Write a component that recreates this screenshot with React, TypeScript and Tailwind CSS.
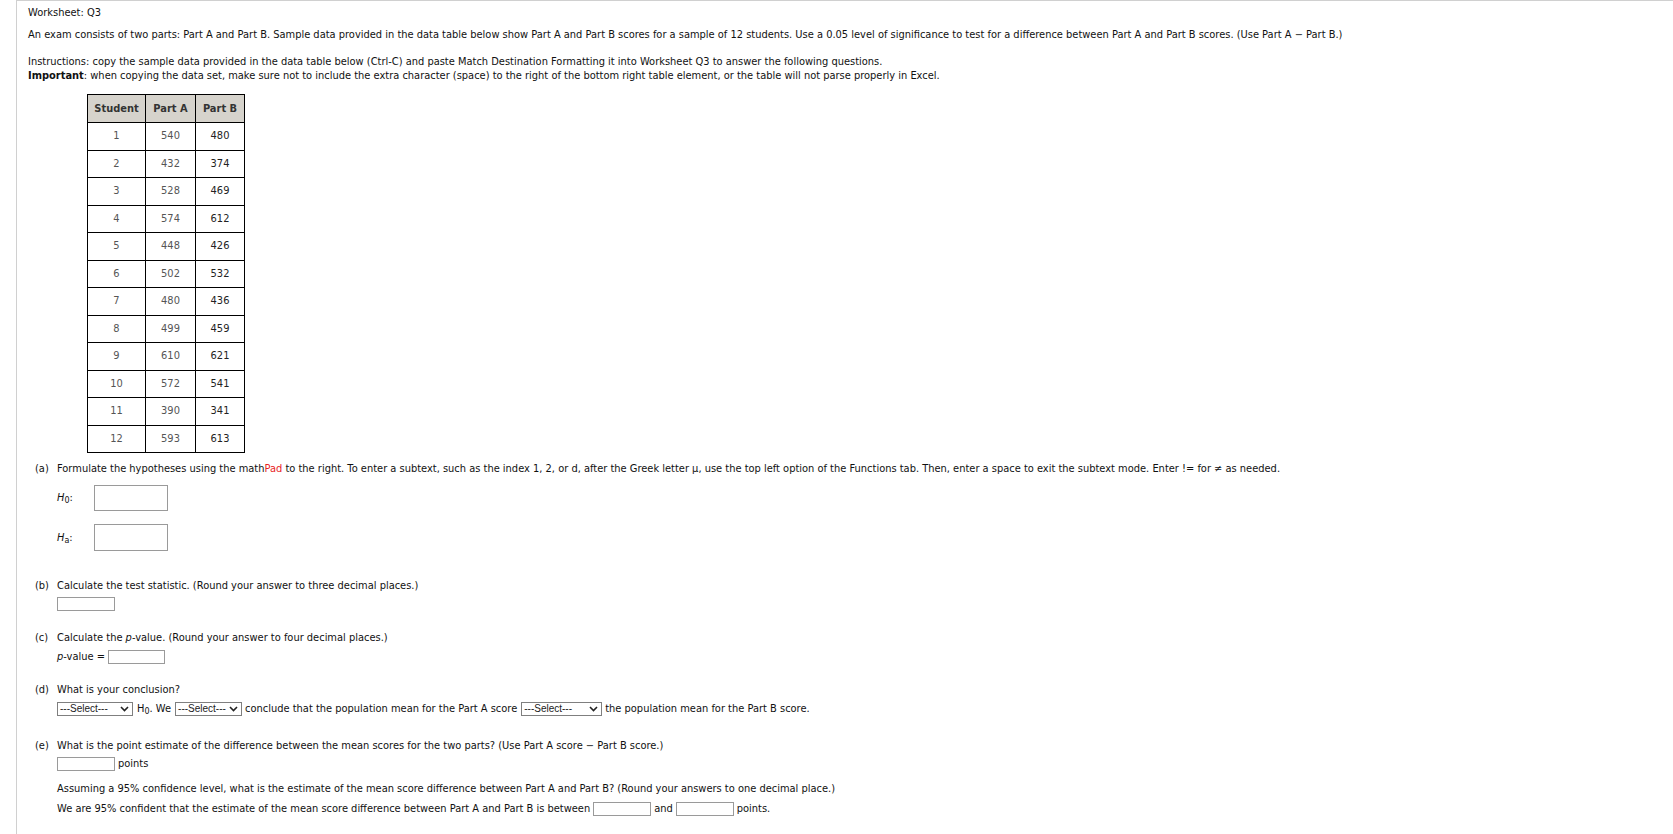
import React from "react";

const ROWS: [number, number, number][] = [
  [1, 540, 480],
  [2, 432, 374],
  [3, 528, 469],
  [4, 574, 612],
  [5, 448, 426],
  [6, 502, 532],
  [7, 480, 436],
  [8, 499, 459],
  [9, 610, 621],
  [10, 572, 541],
  [11, 390, 341],
  [12, 593, 613],
];

function Box({ className = "" }: { className?: string }) {
  return <span className={`inline-block border border-[#9a9a9a] bg-white align-middle ${className}`} />;
}

function Select({ w }: { w: string }) {
  return (
    <span
      className={`inline-flex items-center justify-between h-[14px] border border-[#7f7f7f] bg-white align-middle pl-[2px] pr-[3px] font-['Liberation_Sans',Arial,sans-serif] text-[10px] leading-[12px] text-[#222] ${w}`}
    >
      <span>---Select---</span>
      <svg width="9" height="6" viewBox="0 0 9 6" className="shrink-0">
        <path d="M1 1 L4.5 4.5 L8 1" fill="none" stroke="#222" strokeWidth="1.6" />
      </svg>
    </span>
  );
}

function Part({ label, children, className = "" }: { label: string; children: React.ReactNode; className?: string }) {
  return (
    <div className={`flex ${className}`}>
      <div className="w-[22px] shrink-0">{label}</div>
      <div className="flex-1">{children}</div>
    </div>
  );
}

export default function App() {
  return (
    <div className="min-h-screen bg-white font-['DejaVu_Sans',Verdana,sans-serif] text-[9.88px] leading-[14px] text-[#111]">
      <div className="ml-4 min-h-[834px] border-l border-t border-[#d0d0d0] pl-[11px] pt-[5px]">
        <p>Worksheet: Q3</p>
        <p className="mt-[8px]">
          An exam consists of two parts: Part A and Part B. Sample data provided in the data table below show Part A and
          Part B scores for a sample of 12 students. Use a 0.05 level of significance to test for a difference between
          Part A and Part B scores. (Use Part A &minus; Part B.)
        </p>
        <p className="mt-[13px]">
          Instructions: copy the sample data provided in the data table below (Ctrl-C) and paste Match Destination
          Formatting it into Worksheet Q3 to answer the following questions.
          <br />
          <b>Important</b>: when copying the data set, make sure not to include the extra character (space) to the right
          of the bottom right table element, or the table will not parse properly in Excel.
        </p>

        <table className="mt-[11px] ml-[59px] border-collapse text-center">
          <thead>
            <tr className="h-[28px] bg-[#d6d3cc] text-[#333]">
              <th className="w-[58px] border border-black font-bold">Student</th>
              <th className="w-[50px] border border-black font-bold">Part A</th>
              <th className="w-[49px] border border-black font-bold">Part B</th>
            </tr>
          </thead>
          <tbody>
            {ROWS.map(([s, a, b]) => (
              <tr key={s} className="h-[27.5px]">
                <td className="border border-black text-[#555]">{s}</td>
                <td className="border border-black text-[#555]">{a}</td>
                <td className="border border-black text-[#222]">{b}</td>
              </tr>
            ))}
          </tbody>
        </table>

        <div className="pl-[7px]">
          <Part label="(a)" className="mt-[9px]">
            <p>
              Formulate the hypotheses using the math<span className="text-[#e8231e]">Pad</span> to the right. To enter a
              subtext, such as the index 1, 2, or d, after the Greek letter &mu;, use the top left option of the
              Functions tab. Then, enter a space to exit the subtext mode. Enter != for &ne; as needed.
            </p>
            <div className="mt-[9px] flex items-center h-[26px]">
              <span className="w-[37px]">
                <i>H</i>
                <sub className="text-[8px]">0</sub>:
              </span>
              <Box className="w-[74px] h-[26px]" />
            </div>
            <div className="mt-[13px] flex items-center h-[27px]">
              <span className="w-[37px]">
                <i>H</i>
                <sub className="text-[8px]">a</sub>:
              </span>
              <Box className="w-[74px] h-[27px]" />
            </div>
          </Part>

          <Part label="(b)" className="mt-[28px]">
            <p>Calculate the test statistic. (Round your answer to three decimal places.)</p>
            <div className="mt-[4px] flex">
              <Box className="w-[58px] h-[14px]" />
            </div>
          </Part>

          <Part label="(c)" className="mt-[20px]">
            <p>
              Calculate the <i>p</i>-value. (Round your answer to four decimal places.)
            </p>
            <div className="mt-[5px] flex items-center h-[14px]">
              <span>
                <i>p</i>-value =&nbsp;
              </span>
              <Box className="w-[57px] h-[14px]" />
            </div>
          </Part>

          <Part label="(d)" className="mt-[19px]">
            <p>What is your conclusion?</p>
            <div className="mt-[5px] flex items-center h-[14px] whitespace-nowrap">
              <Select w="w-[76px]" />
              <span className="ml-[4px]">
                H<sub className="text-[8px]">0</sub>. We
              </span>
              <span className="ml-[4px]">
                <Select w="w-[67px]" />
              </span>
              <span className="ml-[3px]">conclude that the population mean for the Part A score</span>
              <span className="ml-[4px]">
                <Select w="w-[81px]" />
              </span>
              <span className="ml-[3px]">the population mean for the Part B score.</span>
            </div>
          </Part>

          <Part label="(e)" className="mt-[23px]">
            <p>
              What is the point estimate of the difference between the mean scores for the two parts? (Use Part A score
              &minus; Part B score.)
            </p>
            <div className="mt-[4px] flex items-center h-[14px]">
              <Box className="w-[58px] h-[14px]" />
              <span className="ml-[3px]">points</span>
            </div>
            <p className="mt-[11px]">
              Assuming a 95% confidence level, what is the estimate of the mean score difference between Part A and Part
              B? (Round your answers to one decimal place.)
            </p>
            <div className="mt-[6px] flex items-center h-[14px] whitespace-nowrap">
              <span>We are 95% confident that the estimate of the mean score difference between Part A and Part B is between</span>
              <Box className="ml-[3px] w-[58px] h-[14px]" />
              <span className="ml-[3px]">and</span>
              <Box className="ml-[3px] w-[58px] h-[14px]" />
              <span className="ml-[3px]">points.</span>
            </div>
          </Part>
        </div>
      </div>
    </div>
  );
}
